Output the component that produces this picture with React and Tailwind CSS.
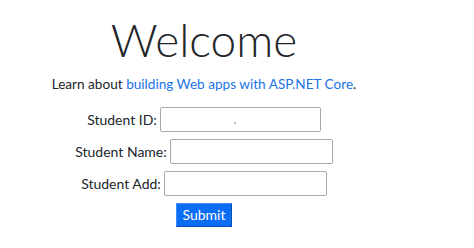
export default function App() {
	const fields = [
		{ id: "sid", label: "Student ID:", w: "w-[161px]" },
		{ id: "sname", label: "Student Name:", w: "w-[163px]" },
		{ id: "sadd", label: "Student Add:", w: "w-[163px]" },
	];

	return (
		<div className="w-[408px] pt-[12px] text-center text-[#212529] font-['Lato',sans-serif]">
			<h1 className="text-[46px] leading-[1.2] font-light">
				Welcome
			</h1>
			<p className="mt-[6px] text-[13.6px] leading-[22px]">
				Learn about{" "}
				<a href="#" className="text-[#1a73e8]">
					building Web apps with ASP.NET Core
				</a>
				.
			</p>

			<form className="mt-[12px] flex flex-col items-center">
				{fields.map((f, i) => (
					<div key={f.id} className="mb-[7px] flex items-center justify-center gap-[3px]">
						<label htmlFor={f.id} className="text-[14px]">
							{f.label}
						</label>
						<div className="relative">
							<input
								id={f.id}
								type="text"
								className={`${f.w} h-[25px] border border-[#a9a9a9] rounded-[2px] bg-white`}
							/>
							{i == 0 && (
								<span className="absolute left-[74px] top-[15px] w-[2px] h-[2px] rounded-full bg-[#9aa7b8]" />
							)}
						</div>
					</div>
				))}
				<button
					type="submit"
					className="w-[56px] h-[24px] bg-[#0b6cf4] text-white text-[14px] leading-[22px] border border-[#0a4fb0] border-t-[#3b8cff] border-l-[#3b8cff]"
				>
					Submit
				</button>
			</form>
		</div>
	);
}
